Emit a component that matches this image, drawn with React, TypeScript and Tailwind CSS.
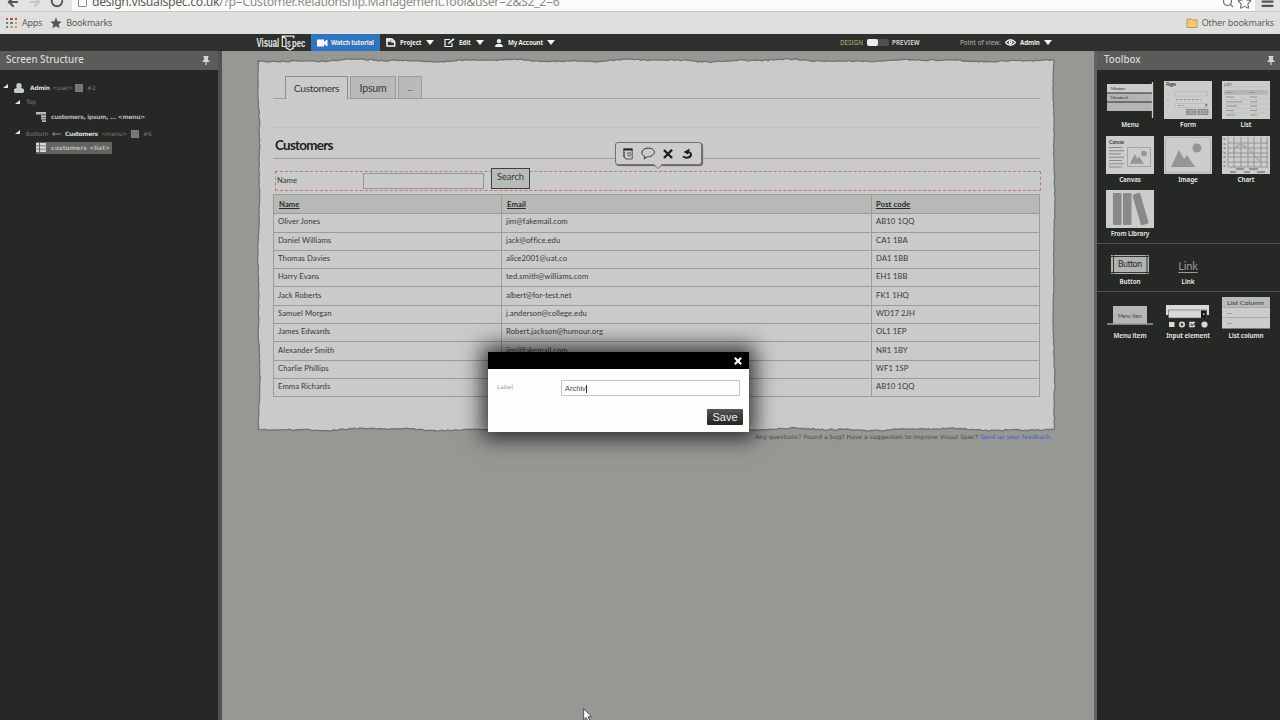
import type { ReactNode } from 'react';
import { ArrowLeft, ArrowRight, Star, Search, RotateCw, Menu as MenuIcon } from 'lucide-react';

const CUSTOMERS = [
  { name: 'Oliver Jones', email: 'jim@fakemail.com', postCode: 'AB10 1QQ' },
  { name: 'Daniel Williams', email: 'jack@office.edu', postCode: 'CA1 1BA' },
  { name: 'Thomas Davies', email: 'alice2001@uat.co', postCode: 'DA1 1BB' },
  { name: 'Harry Evans', email: 'ted.smith@williams.com', postCode: 'EH1 1BB' },
  { name: 'Jack Roberts', email: 'albert@for-test.net', postCode: 'FK1 1HQ' },
  { name: 'Samuel Morgan', email: 'j.anderson@college.edu', postCode: 'WD17 2JH' },
  { name: 'James Edwards', email: 'Robert.jackson@humour.org', postCode: 'OL1 1EP' },
  { name: 'Alexander Smith', email: 'jim@fakemail.com', postCode: 'NR1 1BY' },
  { name: 'Charlie Phillips', email: '', postCode: 'WF1 1SP' },
  { name: 'Emma Richards', email: '', postCode: 'AB10 1QQ' },
];

const PAPER_W = 799;
const PAPER_H = 374;

function jitter(i: number) {
  const noise = Math.sin(i * 127.1) * 43758.5453;
  return (noise - Math.floor(noise) - 0.5) * 1.3 + Math.sin(i * 0.09) * 0.9 + Math.sin(i * 0.23) * 0.5;
}

function paperOutline() {
  const pts: string[] = [];
  for (let x = 1; x <= PAPER_W - 3; x += 2) pts.push(`${x},${(2.5 + jitter(x / 2)).toFixed(1)}`);
  for (let y = 3; y <= PAPER_H - 4; y += 3) pts.push(`${(PAPER_W - 2 + jitter(y / 3 + 40) * 0.7).toFixed(1)},${y}`);
  for (let x = PAPER_W - 2; x >= 1; x -= 2) pts.push(`${x},${(PAPER_H - 2.5 + jitter(x / 2 + 900)).toFixed(1)}`);
  for (let y = PAPER_H - 4; y >= 3; y -= 3) pts.push(`${(1.8 + jitter(y / 3 + 120) * 0.7).toFixed(1)},${y}`);
  return pts.join(' ');
}

const PAPER_POINTS = paperOutline();

function Caret({ className = '' }: { className?: string }) {
  return (
    <svg viewBox="0 0 8 5" className={`h-[5px] w-2 ${className}`}>
      <path d="M0 0h8L4 5z" fill="#f2f4f1" />
    </svg>
  );
}

function Pin() {
  return (
    <svg viewBox="0 0 8 9" className="h-[9px] w-2" fill="#d3d5d2">
      <path d="M1.5 0h5v1L6 1.400V4l1.600 1v1H4.600v3H3.400V6H.4V5L2 4V1.400L1.500 1z" />
    </svg>
  );
}

function Expander({ className = '' }: { className?: string }) {
  return (
    <svg viewBox="0 0 5 4" className={`h-1 w-[5px] shrink-0 ${className}`}>
      <path d="M5 0v4H0z" fill="#e4e6e3" />
    </svg>
  );
}

function BrowserChrome() {
  const appColours = ['#c5524a', '#b0504a', '#c5524a', '#4f8f6a', '#4a7fae', '#d8a03c', '#5b9a68', '#d8a03c', '#d8a03c'];
  return (
    <div className="h-[34px] shrink-0 bg-[#dfe0dd] font-['Noto_Sans',sans-serif] text-[#5c5e5c]">
      <div className="flex h-[11px] items-start overflow-hidden bg-[#e3e4e1]">
        <ArrowLeft className="-mt-[5px] ml-[6px] size-[14px] shrink-0" strokeWidth={3.8} color="#555755" />
        <ArrowRight className="-mt-[5px] ml-[8px] size-[14px] shrink-0" strokeWidth={3.8} color="#c4c6c3" />
        <RotateCw className="-mt-[6px] ml-[8px] size-[14px] shrink-0" strokeWidth={3.4} color="#555755" />
        <div className="ml-[8px] flex h-[11px] w-[1183px] items-start bg-[#fcfdfb]">
          <div className="-mt-1 ml-[6px] h-[11px] w-[9px] shrink-0 rounded-[1px] border border-[#8e908d]" />
          <span className="-mt-[8px] ml-[5px] whitespace-nowrap text-[12.300px] leading-5 tracking-[-0.350px] text-[#8a8c89]">
            <span className="text-[#5b5d5a]">design.visualspec.co.uk</span>
            /?p=Customer.Relationship.Management.Tool&amp;user=2&amp;S2_2=6
          </span>
          <Search className="-mt-1 ml-auto size-[12px] shrink-0" strokeWidth={2.4} color="#686a68" />
          <Star className="-mt-[5px] ml-[3px] mr-[3px] size-[15px] shrink-0" strokeWidth={1.7} color="#686a68" />
        </div>
        <MenuIcon className="-mt-[6px] ml-[5px] size-[15px] shrink-0" strokeWidth={3.6} color="#555755" />
      </div>
      <div className="flex h-[23px] items-center border-t border-[#c6c8c5] pl-[6px] pr-[6px] text-[9px]">
        <div className="grid grid-cols-3 gap-[2px]">
          {appColours.map((colour, i) => (
            <span key={i} className="size-[2.300px]" style={{ background: colour }} />
          ))}
        </div>
        <span className="ml-[5px] tracking-[-0.2px]">Apps</span>
        <svg viewBox="0 0 24 24" className="ml-[8px] size-[12px]" fill="#555755">
          <path d="M12 1l3.300 7.600 8.200.700-6.200 5.400 1.900 8L12 18.500l-7.200 4.200 1.900-8L.500 9.300l8.200-.700z" />
        </svg>
        <span className="ml-[4px] tracking-[-0.22px]">Bookmarks</span>
        <svg viewBox="0 0 12 10" className="ml-auto h-[10px] w-[12px]">
          <path d="M1 1h4l1 1h5v7.500H1z" fill="#f2c877" stroke="#b98b3e" strokeWidth="0.800" />
        </svg>
        <span className="ml-[4px] tracking-[-0.15px]">Other bookmarks</span>
      </div>
    </div>
  );
}

function Logo() {
  return (
    <svg viewBox="0 0 50 18" className="h-[18px] w-[50px]">
      <g fill="#e6e8e5" fontFamily="'Liberation Sans', sans-serif" fontWeight="700">
        <text transform="translate(.5 13) scale(.62 1)" fontSize="12.500">Visual</text>
        <text transform="translate(31 12.500) scale(.62 1)" fontSize="9">S</text>
        <text transform="translate(36 13) scale(.7 1)" fontSize="11">pec</text>
      </g>
      <path d="M30 12.500h-3.700V2.200h11.500v2.300M26.500 2.200l3.500 2.400v9l4 2.400 3.500-2" fill="none" stroke="#e6e8e5" strokeWidth="1.200" />
    </svg>
  );
}

function TopBar() {
  return (
    <div className="flex h-[17px] shrink-0 items-center bg-[#2e302d] pl-[256px] font-['Noto_Sans',sans-serif] text-[6.200px] font-bold text-[#eceeeb]">
      <Logo />
      <div className="ml-[5px] flex h-[17px] w-[69px] items-center bg-[#3074c0] pl-[6px]">
        <svg viewBox="0 0 11 8" className="h-2 w-[11px]" fill="#fff">
          <path d="M0 .5h7v2.300L10.500.5v7L7 5.200v2.300H0z" />
        </svg>
        <span className="ml-[3px] whitespace-nowrap tracking-[-0.13px]">Watch tutorial</span>
      </div>
      <svg viewBox="0 0 10 9" className="ml-[6px] h-[9px] w-[10px]" fill="none" stroke="#f0f2ef" strokeWidth="1.500">
        <path d="M1 1h5l2.700 2.500V8H1z" />
        <path d="M1 1h3v2H1zM6 1v3h3" />
      </svg>
      <span className="ml-[4px] w-[22px] tracking-[-0.05px]">Project</span>
      <Caret className="ml-[4px]" />
      <svg viewBox="0 0 11 9" className="ml-[10px] h-[9px] w-[11px]" fill="none" stroke="#f0f2ef" strokeWidth="1.200">
        <path d="M6 1.500H1v7h7V5" />
        <path d="M4 6l1-2L9.300.4l1 1L6 5z" fill="#f0f2ef" strokeWidth="0.500" />
      </svg>
      <span className="ml-[4px] w-[11px] tracking-[-0.1px]">Edit</span>
      <Caret className="ml-[6px]" />
      <svg viewBox="0 0 8 8" className="ml-[11px] size-2" fill="#f0f2ef">
        <circle cx="4" cy="2.200" r="2.100" />
        <path d="M.2 8V6.500Q1 5 4 4.700 7 5 7.800 6.500V8z" />
      </svg>
      <span className="ml-[5px] w-[36px] whitespace-nowrap tracking-[-0.120px]">My Account</span>
      <Caret className="ml-[3px]" />
      <span className="ml-[285px] w-[24px] font-medium tracking-[0.05px] text-[#9aa865]">DESIGN</span>
      <span className="ml-[3px] flex h-[7px] w-[22px] rounded-[2px] bg-[#4e504d]">
        <span className="h-[7px] w-[11px] rounded-[2px] bg-[#eceeeb]" />
      </span>
      <span className="ml-[3px] w-[29px] font-medium tracking-[0.2px]">PREVIEW</span>
      <span className="ml-[39px] w-[42px] whitespace-nowrap font-medium tracking-[0.1px] text-[#a6a8a5]">Point of view:</span>
      <svg viewBox="0 0 11 7" className="ml-[3px] h-[7px] w-[11px]" fill="none" stroke="#f0f2ef" strokeWidth="1.500">
        <path d="M.6 3.500Q5.500-2 10.400 3.500 5.500 9 .6 3.500z" />
        <circle cx="5.500" cy="3.500" r="1.300" />
      </svg>
      <span className="ml-[4px] w-[20px] tracking-[-0.1px]">Admin</span>
      <Caret className="ml-[4px]" />
    </div>
  );
}

function PanelHeader({ title, className = '' }: { title: string; className?: string }) {
  return (
    <div className={`flex h-[19px] items-center justify-between bg-[#5a5c59] ${className}`}>
      <span className="font-['Noto_Sans',sans-serif] text-[9.800px] font-medium text-[#d6d8d5]">{title}</span>
      <Pin />
    </div>
  );
}

function ListGlyph() {
  return (
    <svg viewBox="0 0 10 9" className="h-[9px] w-[10px] shrink-0" fill="#d6d8d5">
      <path d="M0 0h3v2.500H0zM4 0h6v2.500H4zM0 3.200h3v2.500H0zM4 3.200h6v2.500H4zM0 6.400h3V9H0zM4 6.400h6V9H4z" />
    </svg>
  );
}

function ScreenStructure() {
  return (
    <div className="w-[222px] shrink-0 border-r-4 border-[#50524f] bg-[#262826]">
      <PanelHeader title="Screen Structure" className="pl-[6px] pr-[8px]" />
      <div className="pt-[9px] font-['DejaVu_Sans',sans-serif] text-[6px] leading-none text-[#777976]">
        <div className="flex h-[17px] items-center pl-[3px]">
          <Expander className="-mt-[3px]" />
          <svg viewBox="0 0 10 10" className="ml-[6px] size-[10px]" fill="#c9cbc8">
            <circle cx="5" cy="2.700" r="2.700" />
            <path d="M0 9V6.300L3 4.500h4l3 1.800V9l-1 1H1z" />
          </svg>
          <span className="ml-[6px] w-[19px] font-bold tracking-[-0.380px] text-[#d6d8d5]">Admin</span>
          <span className="ml-[3px] w-[20px] whitespace-nowrap tracking-[-0.350px]">&lt;user&gt;</span>
          <span className="ml-[3px] size-[8px] border border-[#7e807d] bg-[#747673]" />
          <span className="ml-[4px]">#2</span>
        </div>
        <div className="flex h-[12px] items-center pl-[15px]">
          <Expander />
          <span className="ml-[6px]">Top</span>
        </div>
        <div className="flex h-[17px] items-center pl-[36px]">
          <svg viewBox="0 0 10 10" className="size-[10px]" fill="#b9bbb8">
            <path d="M0 0h10v2.600H0zM5 3.300h5v1.900H5zM5 5.800h5v1.700H5zM6 8.200h4V10H6z" />
          </svg>
          <span className="ml-[5px] whitespace-nowrap font-bold tracking-[-0.3px] text-[#b0b2af]">customers, ipsum, ... &lt;menu&gt;</span>
        </div>
        <div className="flex h-[17px] items-center pl-[15px]">
          <Expander className="-mt-[3px]" />
          <span className="ml-[6px] w-[22px] tracking-[0.050px]">Bottom</span>
          <svg viewBox="0 0 9 4" className="ml-[4px] h-1 w-[9px]" fill="none" stroke="#8c8e8b">
            <path d="M0 2h9M2.500.5L.5 2l2 1.500" />
          </svg>
          <span className="ml-[4px] w-[34px] font-bold tracking-[-0.380px] text-[#d6d8d5]">Customers</span>
          <span className="ml-[2px] w-[25px] whitespace-nowrap tracking-[-0.200px]">&lt;menu&gt;</span>
          <span className="ml-[5px] size-[8px] border border-[#7e807d] bg-[#747673]" />
          <span className="ml-[4px]">#6</span>
        </div>
        <div className="flex h-[12px] items-center pl-[36px]">
          <div className="-mt-px flex h-[12px] w-[76px] items-center bg-[#626461]">
            <ListGlyph />
            <span className="ml-[5px] whitespace-nowrap font-bold tracking-[0.08px] text-[#b6b8b5]">customers &lt;list&gt;</span>
          </div>
        </div>
      </div>
    </div>
  );
}

function SelectionToolbar() {
  return (
    <div className="absolute left-[358px] top-[84px] flex h-[23px] w-[87px] items-center rounded-[3px] border border-[#6f716e] bg-[#cbcccb] pl-[7px] shadow-[1px_1px_1px_#60625f]">
      <svg viewBox="0 0 10 12" className="h-[12px] w-[10px]" fill="none" stroke="#454745">
        <path d="M.800 1h8.400v10H3L.800 9z" strokeWidth="0.900" />
        <path d="M.500 1.500h9" strokeWidth="2" stroke="#222422" />
        <path d="M1.200 4v5l2 2M4 5h4M4.500 6.500L6 8.500 8 6" strokeWidth="0.900" />
      </svg>
      <svg viewBox="0 0 14 13" className="ml-[8px] h-[13px] w-[14px]" fill="none" stroke="#333533" strokeWidth="1">
        <path d="M4 9.500C-.500 8 0 2 6 1.200 13 .400 15.500 5.500 11.500 8.200 9.500 9.800 7.500 9.800 6.500 9.700L3 12z" />
      </svg>
      <svg viewBox="0 0 10 10" className="ml-[8px] size-[10px]" stroke="#1b1d1b" strokeWidth="2.300">
        <path d="M1 1l8 8M9 .800L1 9" />
      </svg>
      <svg viewBox="0 0 11 11" className="ml-[9px] size-[11px]">
        <path d="M1 8.500C4 10.500 9 9.800 9 6.800 9 4.600 7 3.800 5 4" fill="none" stroke="#1b1d1b" strokeWidth="2" />
        <path d="M1.500 4L8 .500 6 6.500z" fill="#1b1d1b" />
      </svg>
      <svg viewBox="0 0 8 5" className="absolute left-[38px] top-[21px] h-[5px] w-2">
        <path d="M0 0h8L4 4z" fill="#cbcccb" />
        <path d="M0 1l4 3.500L8 1" fill="none" stroke="#7c7e7b" strokeWidth="1" />
      </svg>
    </div>
  );
}

function Paper() {
  return (
    <div className="relative ml-[35px] mt-[7px] h-[374px] w-[799px] font-['Lato',sans-serif] text-[#383a38]">
      <svg viewBox={`0 0 ${PAPER_W} ${PAPER_H}`} className="absolute inset-0 h-full w-full">
        <polygon points={PAPER_POINTS} fill="#c9cac9" stroke="#75726f" strokeWidth="1.300" />
      </svg>
      <div className="relative ml-[16px] w-[767px] pt-[18px]">
        <div className="flex h-[23px] items-end">
          <div className="h-full w-[12px] border-b border-[#a0a29f]" />
          <div className="flex h-full w-[63px] items-center justify-center border-x border-t border-[#8c8e8b] pt-px text-[10.400px] tracking-[-0.400px]">Customers</div>
          <div className="h-full w-[2px] border-b border-[#a0a29f]" />
          <div className="flex h-full w-[46px] items-center justify-center border border-[#9a9c99] bg-[#b9bbb9] pt-[2px] text-[10.600px] tracking-[-0.200px]">Ipsum</div>
          <div className="h-full w-[2px] border-b border-[#a0a29f]" />
          <div className="flex h-full w-[24px] items-center justify-center border border-[#9a9c99] bg-[#b9bbb9] text-[8px]">...</div>
          <div className="h-full flex-1 border-b border-[#a0a29f]" />
        </div>
        <div className="mt-[28px] border-t border-dotted border-[#b9bbb9]" />
        <div className="flex h-[31px] items-center border-b border-[#a0a29f] pl-[2px] pt-[4px] text-[13.400px] font-bold tracking-[-0.700px] text-[#1e201e]">
          Customers
        </div>
        <div className="ml-[2px] mt-[12px] flex h-[20px] w-[766px] items-center border border-dashed border-[#bd7d76] pl-px text-[7.700px]">
          <span className="w-[86px]">Name</span>
          <div className="-mt-px h-[16px] w-[121px] border border-[#959795]" />
          <div className="-mt-[5px] ml-[7px] flex h-[21px] w-[39px] items-center justify-center border-[1.500px] border-[#3e403e] bg-[#b9bbb9] pb-[3px] text-[9.300px] tracking-[-0.1px]">
            Search
          </div>
        </div>
        <div className="mt-[3px] w-[767px] border border-[#9a9c99] text-[7.700px] tracking-[0.070px]">
          <div className="grid h-[18.300px] grid-cols-[228px_370px_167px] items-stretch bg-[#b7b9b7] font-bold text-[#2a2c2a] underline">
            <span className="flex items-center border-r border-[#9a9c99] pl-[5px] pt-px">Name</span>
            <span className="flex items-center border-r border-[#9a9c99] pl-[5px] pt-px">Email</span>
            <span className="flex items-center pl-[4px] pt-px">Post code</span>
          </div>
          {CUSTOMERS.map((customer) => (
            <div key={customer.name} className="grid h-[18.300px] grid-cols-[228px_370px_167px] border-t border-[#9a9c99]">
              <span className="flex items-center border-r border-[#9a9c99] pb-[1.500px] pl-[4px]">{customer.name}</span>
              <span className="flex items-center border-r border-[#9a9c99] pb-[1.500px] pl-[4px]">{customer.email}</span>
              <span className="flex items-center pb-[1.500px] pl-[4px]">{customer.postCode}</span>
            </div>
          ))}
        </div>
      </div>
      <SelectionToolbar />
    </div>
  );
}

function Workspace() {
  return (
    <div className="min-w-0 flex-1 bg-[#969894]">
      <Paper />
      <div className="mr-[42px] text-right font-['DejaVu_Sans',sans-serif] text-[6px] leading-[10px] tracking-[0.050px] text-[#4a4c4a]">
        Any questions? Found a bug? Have a suggestion to improve Visual Spec? <span className="text-[#3c5fd0]">Send us your feedback.</span>
      </div>
    </div>
  );
}

function ToolLabel({ children }: { children: ReactNode }) {
  return <span className="mt-[1px] whitespace-nowrap font-['Noto_Sans',sans-serif] text-[6.300px] font-bold leading-[10px] tracking-[-0.12px] text-[#dcdedb]">{children}</span>;
}

function Tool({ label, children }: { label: string; children: ReactNode }) {
  return (
    <div className="flex w-[48px] flex-col items-center">
      {children}
      <ToolLabel>{label}</ToolLabel>
    </div>
  );
}

function Thumb({ children }: { children: ReactNode }) {
  return (
    <svg viewBox="0 0 48 38" className="h-[38px] w-[48px]" fontFamily="Lato, sans-serif" fill="#444644">
      {children}
    </svg>
  );
}

function Mountains() {
  return <path d="M0 22L8 5l5 9 3-4 8 12z" fill="#949693" />;
}

function Toolbox() {
  return (
    <div className="w-[186px] shrink-0 border-l-[3px] border-[#626461] bg-[#262826]">
      <PanelHeader title="Toolbox" className="pl-[7px] pr-[5px]" />
      <div className="grid grid-cols-[repeat(3,48px)] gap-x-[10px] gap-y-[5.500px] pb-[4px] pl-[9px] pt-[11px]">
        <Tool label="Menu">
          <Thumb>
            <path d="M1 3h45v8.500H1z" fill="#cbcdca" />
            <path d="M1 12.500h45v8H1zM1 21.500h45V30H1z" fill="#b3b5b2" />
            <path d="M46.500 1v36" stroke="#cbcdca" strokeWidth="1.300" />
            <text x="4.500" y="9.300" fontSize="4.600" textLength="15">Menu item</text>
            <text x="4.500" y="18" fontSize="4.600" textLength="18">Menu item 2</text>
          </Thumb>
        </Tool>
        <Tool label="Form">
          <Thumb>
            <path d="M0 0h48v38H0z" fill="#cbcdca" />
            <text x="2" y="5" fontSize="4.600" fontWeight="700" textLength="10">Pages</text>
            <path d="M3 13h1.500M3 19h1.500M3 25h1.500M12 18.500h25M14 24.500h6" stroke="#a0a29f" strokeDasharray="3 1" />
            <path d="M11.500 10.500h32v4.500h-32zM11.500 22.500h32v4h-32z" fill="none" stroke="#b2b4b1" strokeWidth="0.600" />
            <path d="M41 23.500h2.500L42 25.500z" />
            <path d="M22.500 28.500h9.500v5h-9.500zM34 28.500h10v5H34z" fill="#aaacaa" stroke="#7b7d7a" strokeWidth="0.800" />
            <path d="M23 31h9M34.500 31h9" stroke="#6f716e" strokeDasharray="1.500 1" />
          </Thumb>
        </Tool>
        <Tool label="List">
          <Thumb>
            <path d="M0 0h48v38H0z" fill="#cbcdca" />
            <path d="M2 9h44v4.500H2z" fill="#b3b5b2" />
            <text x="2" y="4.500" fontSize="4.200">LIST</text>
            <path d="M2 6h44M2 13.500h44M2 18.500h44M2 23h44M2 27.500h44M2 32h44" stroke="#b5b7b4" strokeWidth="0.500" />
            <path d="M4 11.500h7M28 11.500h5M4 16h8M4 20.800h16M4 25h11M4 29.500h8M4 34h9M28 16h7M28 20.800h7M28 25h7M28 29.500h7M28 34h7" stroke="#92948f" strokeWidth="1" />
          </Thumb>
        </Tool>
        <Tool label="Canvas">
          <Thumb>
            <path d="M0 0h48v38H0z" fill="#cbcdca" />
            <text x="3" y="8" fontSize="5.200" fontWeight="700" textLength="15">Canvas</text>
            <path d="M3 11.500h13M3 14.800h15M3 18h12M3 21.200h15M3 24.500h13M3 27.700h15M3 31h13" stroke="#8b8d8a" strokeWidth="1.100" />
            <path d="M21.500 11.500h23v19h-23z" fill="none" stroke="#a5a7a4" />
            <g transform="translate(24 15) scale(.58)"><Mountains /></g>
            <circle cx="38" cy="17.500" r="2.800" fill="#949693" />
          </Thumb>
        </Tool>
        <Tool label="Image">
          <Thumb>
            <path d="M0 0h48v38H0z" fill="#cbcdca" />
            <path d="M1.500 1.500h45v35h-45z" fill="none" stroke="#b2b4b1" />
            <g transform="translate(7 9)"><Mountains /></g>
            <circle cx="33" cy="12" r="4.500" fill="#949693" />
          </Thumb>
        </Tool>
        <Tool label="Chart">
          <Thumb>
            <path d="M0 0h48v38H0z" fill="#cbcdca" />
            <path d="M6 1v30h40M12 1v30M19 1v30M26 1v30M32 1v30M39 1v30M45 1v30M6 7h40M6 12h40M6 17h40M6 21h40M6 26h40" fill="none" stroke="#7f817e" strokeWidth="0.700" />
            <path d="M11 17l2-5 5-4 4 2 5 3 6 7 6 7" fill="none" stroke="#a6a8a5" strokeWidth="1.600" />
            <path d="M1.500 3h2M1.500 8h2M1.500 12h2M1.500 17h2M1.500 21h2M1.500 26h2M1.500 30h2M14 33h8M27 33h9M8 36h6M22 36h6M35 36h8" stroke="#5a5c59" strokeWidth="1.100" />
          </Thumb>
        </Tool>
        <Tool label="From Library">
          <Thumb>
            <path d="M0 0h48v38H0z" fill="#cbcdca" />
            <rect x="7" y="3" width="8.500" height="32" rx="1" fill="#888a87" />
            <rect x="17" y="3" width="8.500" height="32" rx="1" fill="#888a87" />
            <rect x="30.500" y="3" width="8" height="32" rx="1" fill="#888a87" transform="rotate(-16 34.500 19)" />
          </Thumb>
        </Tool>
      </div>
      <div className="flex gap-[10px] border-t border-[#50524f] pb-[4px] pl-[9px] pt-[10px]">
        <Tool label="Button">
          <svg viewBox="0 0 40 22" className="h-[22px] w-[40px]">
            <path d="M1 1h38v19H1z" fill="#b1b3b0" />
            <path d="M3.500 0v21M0 2.500h40M37 0v21M0 18.500h40" stroke="#333533" strokeWidth="1" />
            <text x="8" y="13" fontSize="8.500" textLength="24" fontFamily="Lato, sans-serif" fill="#2a2c2a">Button</text>
          </svg>
        </Tool>
        <Tool label="Link">
          <span className="flex h-[22px] items-center pt-[2px] font-['Lato',sans-serif] text-[11px] tracking-[-0.100px] text-[#989a97] underline underline-offset-2">Link</span>
        </Tool>
      </div>
      <div className="flex items-end gap-[10px] border-t border-[#50524f] pl-[9px] pt-[5px]">
        <Tool label="Menu item">
          <svg viewBox="0 0 48 25" className="h-[25px] w-[48px]">
            <path d="M7 1h34v18H7z" fill="#b5b7b4" />
            <path d="M1 19h46" stroke="#9a9c99" strokeWidth="1.300" />
            <text x="12" y="13" fontSize="6.500" textLength="24" lengthAdjust="spacingAndGlyphs" fontFamily="Lato, sans-serif" fill="#444644">Menu item</text>
          </svg>
        </Tool>
        <Tool label="Input element">
          <svg viewBox="0 0 48 25" className="h-[25px] w-[48px]" fill="#d8dad7">
            <path d="M2 0h43v10H2z" />
            <path d="M4.500 5h38v8h-38z" stroke="#555755" strokeWidth="0.600" />
            <path d="M37 5.500h5.500V13H37z" fill="#151715" />
            <path d="M38.500 8.500h2.600l-1.300 2z" />
            <path d="M5 17h5.500v5H5z" />
            <circle cx="18" cy="19.500" r="2.200" fill="none" stroke="#d8dad7" strokeWidth="1.700" />
            <path d="M30 19.500V21.500h-4V17.500h4M27.500 19.500L31 17" fill="none" stroke="#d8dad7" strokeWidth="1.500" />
            <circle cx="40.500" cy="19.500" r="3.100" />
          </svg>
        </Tool>
        <Tool label="List column">
          <svg viewBox="0 0 48 33" className="h-[33px] w-[48px]">
            <path d="M0 0h48v31.500H0z" fill="#cbcdca" />
            <path d="M0 0h48v10H0z" fill="#babcb9" />
            <path d="M0 10.500h48M0 20.500h48" stroke="#9a9c99" strokeWidth="0.700" />
            <path d="M5 16.500h5M5 26.500h5" stroke="#8c8e8b" strokeWidth="0.700" />
            <text x="5" y="8" fontSize="6" textLength="37" lengthAdjust="spacingAndGlyphs" fontFamily="Lato, sans-serif" fill="#333533">List Column</text>
          </svg>
        </Tool>
      </div>
    </div>
  );
}

function LabelDialog() {
  return (
    <div className="absolute left-[488px] top-[352px] h-[80px] w-[261px] bg-[#fdfefc] font-['Liberation_Sans',sans-serif] shadow-[0_0_20px_6px_rgba(0,0,0,0.75)]">
      <div className="flex h-[17px] items-center justify-end bg-black pr-[7px]">
        <svg viewBox="0 0 8 8" className="size-2" stroke="#fff" strokeWidth="2.200">
          <path d="M.8.800l6.400 6.400M7.200.800L.8 7.200" />
        </svg>
      </div>
      <div className="flex items-center pl-[9px] pr-[9px] pt-[11px]">
        <span className="-mt-[3px] w-[64px] font-['DejaVu_Sans',sans-serif] text-[6px] text-[#9b9d9a]">Label</span>
        <div className="flex h-[16px] flex-1 items-center border border-[#c4c6c3] pl-[3px] pt-px text-[7.500px] text-[#4a4c4a]">
          Archiv<span className="h-[8px] w-px bg-[#333533]" />
        </div>
      </div>
      <div className="flex justify-end pr-[6px] pt-[13px]">
        <button type="button" className="h-[16px] w-[36px] rounded-[1px] bg-gradient-to-b from-[#555755] to-[#222422] text-[11px] leading-[16px] text-[#eceeeb]">
          Save
        </button>
      </div>
    </div>
  );
}

export default function App() {
  return (
    <div className="relative flex h-[720px] w-[1280px] flex-col overflow-hidden bg-[#969894]">
      <BrowserChrome />
      <TopBar />
      <div className="flex min-h-0 flex-1">
        <ScreenStructure />
        <Workspace />
        <Toolbox />
      </div>
      <LabelDialog />
      <svg viewBox="0 0 9 14" className="absolute left-[583px] top-[708px] h-[14px] w-[9px]">
        <path d="M.700.700v11l2.500-2.300 1.800 4 1.800-.800L5 8.800h3.500z" fill="#fff" stroke="#333" strokeWidth="0.800" />
      </svg>
    </div>
  );
}
